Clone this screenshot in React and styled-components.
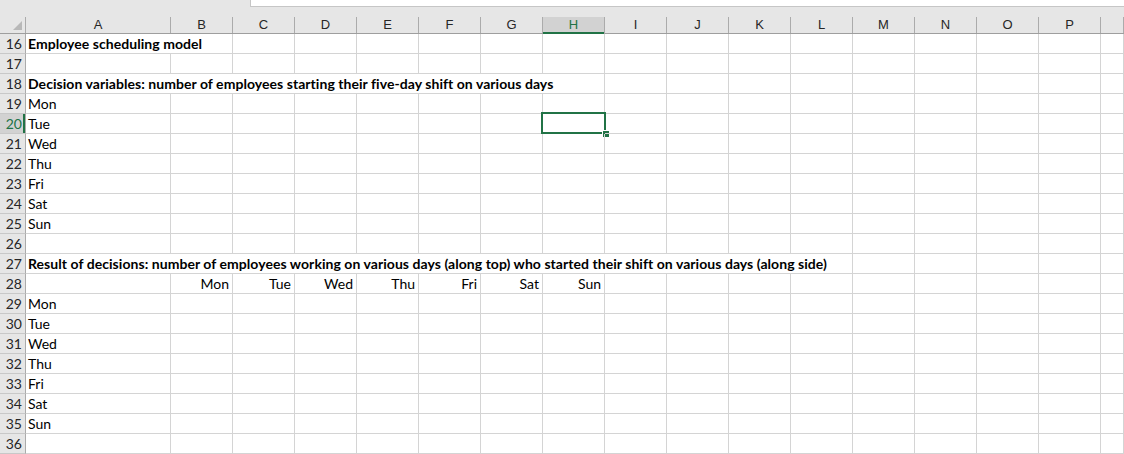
import React from "react";
import styled, { createGlobalStyle } from "styled-components";

const Global = createGlobalStyle`
  html, body { margin: 0; padding: 0; background: #ffffff; overflow: hidden; }
  body { width: 1124px; height: 454px; }
`;

const COLS = "26px 145px repeat(15, 62px) 1fr";
const GRID = "#d4d4d4";
const GREEN = "#217346";

const Sheet = styled.div`
  width: 1124px;
  height: 454px;
  overflow: hidden;
  display: flex;
  flex-direction: column;
  background: #fff;
`;

const TopBar = styled.div`
  height: 17px;
  background: #e6e6e6;
  display: flex;
  flex-shrink: 0;
`;

const FormulaBox = styled.div`
  margin-left: 250px;
  flex: 1;
  height: 6px;
  background: #fff;
  border-bottom: 1px solid #c6c6c6;
  border-left: 1px solid #c6c6c6;
`;

const HeaderRow = styled.div`
  display: grid;
  grid-template-columns: ${COLS};
  height: 16px;
  background: #e6e6e6;
  border-bottom: 1px solid #9e9e9e;
  flex-shrink: 0;
`;

const Corner = styled.div`
  position: relative;
  border-right: 1px solid #ababab;
  &::after {
    content: "";
    position: absolute;
    right: 3px;
    bottom: 3px;
    width: 0;
    height: 0;
    border-style: solid;
    border-width: 0 0 9px 9px;
    border-color: transparent transparent #b8b8b8 transparent;
  }
`;

const ColHead = styled.div`
  font-family: "Liberation Sans", Arial, sans-serif;
  font-size: 13px;
  line-height: 16px;
  text-align: center;
  color: ${(p) => (p.$sel ? GREEN : "#262626")};
  background: ${(p) => (p.$sel ? "#d2d2d2" : "transparent")};
  border-right: 1px solid #ababab;
  box-shadow: ${(p) => (p.$sel ? `inset 0 -2px 0 ${GREEN}` : "none")};
  margin-bottom: ${(p) => (p.$sel ? "-1px" : "0")};
  height: ${(p) => (p.$sel ? "17px" : "16px")};
  box-sizing: border-box;
`;

const Row = styled.div`
  display: grid;
  grid-template-columns: ${COLS};
  height: 20px;
  flex-shrink: 0;
`;

const RowHead = styled.div`
  font-family: Lato, "Open Sans", sans-serif;
  font-size: 14px;
  line-height: 19px;
  text-align: right;
  padding-right: 3px;
  box-sizing: border-box;
  color: ${(p) => (p.$sel ? GREEN : "#262626")};
  background: ${(p) => (p.$sel ? "#d2d2d2" : "#e6e6e6")};
  border-right: 1px solid #ababab;
  border-bottom: 1px solid #c8c8c8;
  box-shadow: ${(p) => (p.$sel ? `inset -2px 0 0 ${GREEN}` : "none")};
`;

const Cell = styled.div`
  position: relative;
  font-family: Lato, "Open Sans", sans-serif;
  font-size: 14px;
  font-weight: ${(p) => (p.$bold ? 700 : 400)};
  letter-spacing: ${(p) => (p.$bold ? "0.05px" : "0")};
  font-variant-ligatures: none;
  line-height: 19px;
  color: #000;
  white-space: nowrap;
  overflow: visible;
  text-align: ${(p) => (p.$right ? "right" : "left")};
  padding: 0 3px 0 2px;
  box-sizing: border-box;
  border-right: 1px solid ${GRID};
  border-bottom: 1px solid ${GRID};
  grid-column: ${(p) => (p.$span ? `span ${p.$span}` : "auto")};
`;

const Selection = styled.div`
  position: absolute;
  left: -2px;
  top: -2px;
  width: 65px;
  height: 22px;
  box-sizing: border-box;
  border: 2px solid ${GREEN};
  pointer-events: none;
  &::after {
    content: "";
    position: absolute;
    right: -5px;
    bottom: -5px;
    width: 7px;
    height: 7px;
    box-sizing: border-box;
    background: ${GREEN};
    border-left: 1px solid #fff;
    border-top: 1px solid #fff;
  }
`;

const letters = "ABCDEFGHIJKLMNOP".split("");
const days = ["Mon", "Tue", "Wed", "Thu", "Fri", "Sat", "Sun"];

const rows = [
  { n: 16, text: "Employee scheduling model", bold: true, span: 2 },
  { n: 17 },
  {
    n: 18,
    text: "Decision variables: number of employees starting their five-day shift on various days",
    bold: true,
    span: 8,
  },
  ...days.map((d, i) => ({ n: 19 + i, text: d })),
  { n: 26 },
  {
    n: 27,
    text: "Result of decisions: number of employees working on various days (along top) who started their shift on various days (along side)",
    bold: true,
    span: 12,
  },
  { n: 28, header: true },
  ...days.map((d, i) => ({ n: 29 + i, text: d })),
  { n: 36 },
];

const TOTAL = 17; // A..P + trailing column

function SheetRow({ r }) {
  const cells = [];
  if (r.header) {
    cells.push(<Cell key="a" />);
    days.forEach((d) => cells.push(<Cell key={d} $right>{d}</Cell>));
    for (let i = 8; i < TOTAL; i++) cells.push(<Cell key={i} />);
  } else {
    const span = r.span || 1;
    cells.push(
      <Cell key="a" $bold={r.bold} $span={span > 1 ? span : undefined}>
        {r.text}
      </Cell>
    );
    for (let i = span; i < TOTAL; i++) {
      const isSel = r.n === 20 && i === 7;
      cells.push(<Cell key={i}>{isSel && <Selection />}</Cell>);
    }
  }
  return (
    <Row>
      <RowHead $sel={r.n === 20}>{r.n}</RowHead>
      {cells}
    </Row>
  );
}

export default function App() {
  return (
    <>
      <Global />
      <Sheet>
        <TopBar>
          <FormulaBox />
        </TopBar>
        <HeaderRow>
          <Corner />
          {letters.map((l) => (
            <ColHead key={l} $sel={l === "H"}>
              {l}
            </ColHead>
          ))}
          <ColHead />
        </HeaderRow>
        {rows.map((r) => (
          <SheetRow key={r.n} r={r} />
        ))}
      </Sheet>
    </>
  );
}
